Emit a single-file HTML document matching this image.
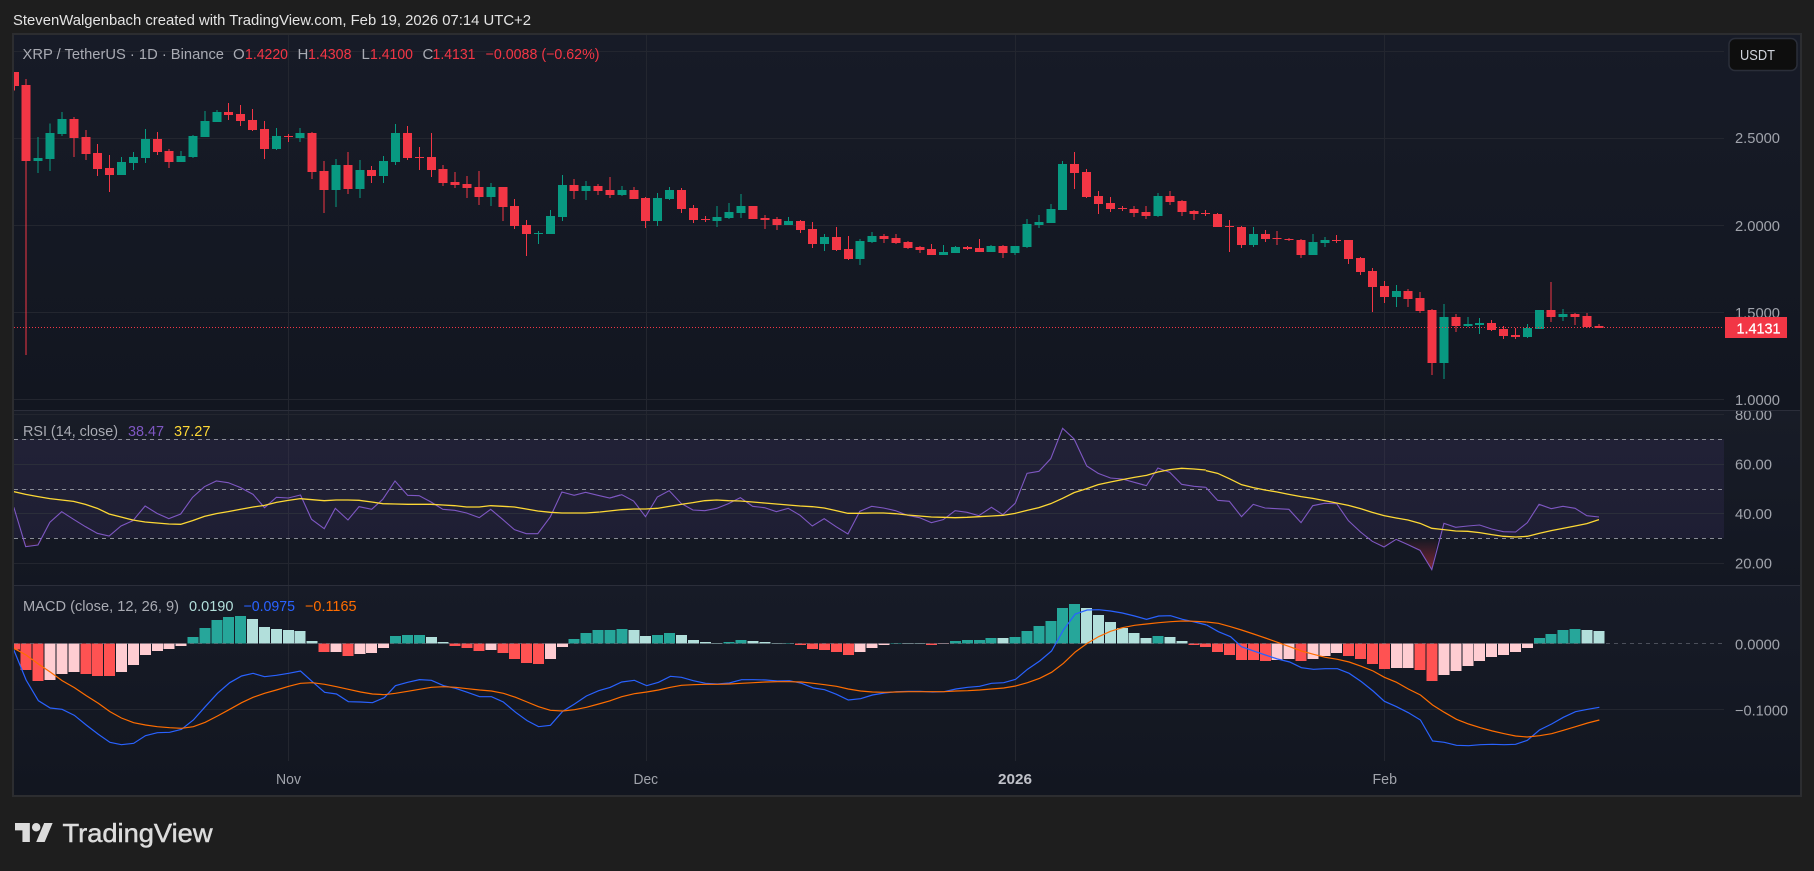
<!DOCTYPE html>
<html lang="en"><head><meta charset="utf-8"><title>XRP / TetherUS chart</title>
<style>
html,body{margin:0;padding:0;background:#1e1e1e;width:1814px;height:871px;overflow:hidden}
svg{position:absolute;left:0;top:0;display:block}
text{font-family:"Liberation Sans",sans-serif;font-size:15px}
.n{vector-effect:non-scaling-stroke;fill:none}
.b{vector-effect:non-scaling-stroke;fill:none;shape-rendering:crispEdges}
.s{fill:#a0a3ab}
.l{fill:#a9abb3}
.r{fill:#f23645}
</style></head><body>
<svg width="1814" height="871" viewBox="0 0 1814 871" xmlns="http://www.w3.org/2000/svg">
<defs>
<linearGradient id="g1" x1="0" y1="0" x2="0" y2="1"><stop offset="0" stop-color="#171b27"/><stop offset="1" stop-color="#121620"/></linearGradient>
<linearGradient id="g2" x1="0" y1="0" x2="0" y2="1"><stop offset="0" stop-color="#181c27"/><stop offset="1" stop-color="#131722"/></linearGradient>
<linearGradient id="rf" gradientUnits="userSpaceOnUse" x1="0" y1="415" x2="0" y2="515"><stop offset="0" stop-color="#f23645" stop-opacity="0"/><stop offset="1" stop-color="#f23645" stop-opacity=".5"/></linearGradient>
<clipPath id="cp"><rect x="14" y="35" width="1786" height="760"/></clipPath>
<clipPath id="c80"><rect x="1725" y="411" width="75" height="20"/></clipPath>
</defs>
<rect width="1814" height="871" fill="#1e1e1e"/>
<text x="13" y="25" textLength="518" lengthAdjust="spacingAndGlyphs" fill="#e4e4e4">StevenWalgenbach created with TradingView.com, Feb 19, 2026 07:14 UTC+2</text>

<rect x="14" y="35" width="1786" height="375" fill="url(#g1)"/>
<rect x="14" y="410" width="1786" height="175" fill="url(#g2)"/>
<rect x="14" y="585" width="1786" height="210" fill="url(#g1)"/>

<g clip-path="url(#cp)">
<!-- grid -->
<g stroke="#23262f" stroke-width="1" shape-rendering="crispEdges">
<path d="M14 51.5H1724M14 138.5H1724M14 225.5H1724M14 312.5H1724M14 399.5H1724M14 414.5H1724M14 464.5H1724M14 513.5H1724M14 563.5H1724M14 709.5H1724"/>
<path d="M288.5 35V761M646.5 35V761M1015.5 35V761M1384.5 35V761"/>
</g>
<rect x="14" y="439" width="1710" height="99" fill="#7e57c2" fill-opacity=".1"/>
<g stroke="#2b2e3a" stroke-width="1" shape-rendering="crispEdges">
<path d="M14 410.5H1800M14 585.5H1800M14 464.5H1724M14 513.5H1724"/>
</g>
<g stroke="#8a8d96" stroke-width="1" stroke-dasharray="4 4" shape-rendering="crispEdges">
<path d="M14 439.5H1724M14 489.5H1724M14 538.5H1724"/>
</g>

<!-- candles k=-1..49 -->
<g transform="translate(26.2,0) scale(11.914,.33333)">
<path class="b" stroke="#089981" stroke-width="1" d="M1 411V519M2 370V513M3 336V408M8 471V525M9 456V510M10 387V489M13 453V486M14 405V474M15 333V411M16 330V366M21 384V450M23 384V426M26 477V621M28 480V594M30 468V549M31 372V495M39 549V618M43 693V732M44 630V702M45 525V663M47 543V600"/>
<path class="b" stroke="#089981" stroke-width="9" d="M1 474V483M2 399V477M3 357V402M8 486V525M9 471V489M10 417V474M13 468V486M14 408V471M15 363V411M16 336V366M21 408V447M23 399V414M26 495V570M28 510V567M30 483V528M31 399V486M39 561V591M43 699V702M44 648V702M45 555V651M47 558V573"/>
<path class="b" stroke="#f23645" stroke-width="1" d="M-1 216V272M0 237V1065M4 351V471M5 390V480M6 432V528M7 465V576M11 396V465M12 447V504M17 309V360M18 315V378M19 327V393M20 363V477M22 402V426M24 396V537M25 483V639M27 456V582M29 498V549M32 378V480M33 441V510M34 399V531M35 495V558M36 516V564M37 528V594M38 513V615M40 561V663M41 597V687M42 660V768M46 537V597M48 552V585M49 531V594"/>
<path class="b" stroke="#f23645" stroke-width="9" d="M-1 216V258M0 255V483M4 357V414M5 411V462M6 459V507M7 504V525M11 417V456M12 453V486M17 336V345M18 342V363M19 360V390M20 387V447M22 408V411M24 399V516M25 513V570M27 495V567M29 510V528M32 399V474M33 471V474M34 471V510M35 507V549M36 546V555M37 552V564M38 561V591M40 561V621M41 618V678M42 675V702M46 555V573M48 558V573M49 570V585"/>
</g>
<!-- candles k=50..99 -->
<g transform="translate(26.2,100) scale(11.914,.33333)">
<path class="b" stroke="#089981" stroke-width="1" d="M50 258V288M53 279V378M54 261V300M58 318V381M59 309V357M60 282V354M64 351V375M67 402V453M70 417V495M71 396V429M77 435V465M78 438V459M81 435V456M83 438V465M84 357V444M85 345V384M86 312V369M87 183V330M95 279V351"/>
<path class="b" stroke="#089981" stroke-width="9" d="M50 270V285M53 294V363M54 270V297M58 351V363M59 336V354M60 318V339M64 363V375M67 411V432M70 423V477M71 408V426M77 456V465M78 441V459M81 438V456M83 438V459M84 372V441M85 366V375M86 327V369M87 192V330M95 288V348"/>
<path class="b" stroke="#f23645" stroke-width="1" d="M51 261V297M52 291V384M55 264V339M56 315V369M57 348V366M61 318V357M62 345V387M63 351V390M65 360V399M66 366V444M68 381V453M69 408V480M72 402V429M73 402V432M74 423V447M75 438V459M76 432V465M79 438V450M80 417V456M82 435V474M88 156V267M89 207V294M90 273V342M91 291V336M92 318V333M93 318V351M94 318V357M96 273V315M97 300V348M98 330V360M99 330V348"/>
<path class="b" stroke="#f23645" stroke-width="9" d="M51 270V297M52 294V363M55 270V327M56 324V360M57 357V360M61 318V357M62 354V360M63 357V375M65 363V390M66 387V432M68 411V450M69 447V477M72 408V417M73 414V429M74 426V444M75 441V450M76 447V465M79 441V447M80 444V456M82 438V459M88 192V219M89 216V291M90 288V312M91 309V327M92 324V327M93 327V339M94 336V348M96 288V306M97 303V336M98 333V342M99 339V342"/>
</g>
<!-- candles k=100..132 -->
<g transform="translate(26.2,0) scale(11.914,.33333)">
<path class="b" stroke="#089981" stroke-width="1" d="M103 681V741M108 702V765M109 711V741M115 855V921M119 912V1137M121 951V981M122 954V1002M126 972V1014M127 930V987M129 927V963"/>
<path class="b" stroke="#089981" stroke-width="9" d="M103 702V735M108 726V765M109 720V729M115 873V891M119 951V1089M121 972V978M122 969V975M126 984V1011M127 930V987M129 942V951"/>
<path class="b" stroke="#f23645" stroke-width="1" d="M100 639V681M101 660V756M102 678V744M104 690V726M105 693V735M106 714V723M107 717V774M110 705V729M111 720V792M112 771V825M113 804V936M114 843V909M116 867V921M117 876V939M118 927V1125M120 942V996M123 960V993M124 978V1017M125 984V1017M128 846V966M130 939V975M131 939V984M132 972V984"/>
<path class="b" stroke="#f23645" stroke-width="9" d="M100 642V681M101 678V681M102 681V735M104 702V717M105 714V717M106 717V720M107 720V765M110 720V723M111 720V777M112 774V816M113 813V861M114 858V891M116 873V897M117 894V933M118 930V1089M120 951V978M123 969V990M124 987V1008M125 1005V1011M128 930V951M130 942V951M131 948V981M132 978V984"/>
</g>
<path d="M14 327.5H1724" stroke="#f23645" stroke-width="1" stroke-dasharray="1 2" shape-rendering="crispEdges" fill="none"/>

<!-- RSI oversold fills -->
<g transform="translate(1200,400) scale(.39154,.33333)"><polygon fill="url(#rf)" points="425,415 440,424 470,441 490,424 501,418 531,434 562,451 592,509 608,415"/></g>
<g transform="translate(0,400) scale(.39541,.33333)"><polygon fill="url(#rf)" points="50,415 65,440 96,435 112,415"/></g>

<!-- RSI line -->
<g transform="translate(0,400) scale(.39541,.33333)">
<polyline class="n" stroke="#7e57c2" stroke-width="1.1" points="35,322 65,440 96,435 126,367 156,335 186,358 216,380 246,400 276,408 306,378 336,362 367,318 397,340 427,356 457,342 487,292 517,260 547,243 577,248 607,262 640,283 669,323 699,292 729,294 760,285 788,358 820,386 848,325 880,360 908,320 940,328 968,298 999,243 1031,286 1060,287 1090,306 1120,328 1150,331 1180,339 1212,353 1241,328 1271,358 1301,389 1331,401 1360,401 1392,350 1421,276 1452,286 1481,277 1512,286 1542,294 1568,285"/>
<polyline class="n" stroke="#fdd835" stroke-width="1.3" points="35,275 65,283 96,290 126,296 186,304 216,313 246,325 276,342 306,351 336,360 367,366 397,369 427,372 457,373 487,362 517,349 547,341 577,335 607,328 640,321 669,316 699,307 729,301 760,296 790,299 820,302 850,300 880,300 908,301 940,306 968,311 1000,312 1031,313 1060,313 1090,313 1120,315 1150,317 1180,321 1212,321 1241,317 1271,319 1301,321 1331,327 1360,333 1392,337 1421,339 1452,339 1481,339 1517,336"/>
</g>
<g transform="translate(600,400) scale(.39541,.33333)">
<polyline class="n" stroke="#7e57c2" stroke-width="1.1" points="25,294 55,284 85,303 115,350 145,291 175,272 205,310 235,330 265,332 295,325 325,311 355,293 386,319 416,323 446,335 476,325 506,346 537,378 567,356 597,380 627,402 657,334 687,319 717,324 747,332 778,346 808,353 838,368 868,359 898,332 928,337 958,347 990,322 1019,344 1050,310 1080,220 1110,214 1140,176 1170,85 1199,117 1231,198 1260,220 1291,234 1321,237 1351,247 1382,257 1411,204 1441,217 1471,253 1502,259 1532,262"/>
<polyline class="n" stroke="#fdd835" stroke-width="1.3" points="0,336 55,329 85,327 115,327 145,325 175,319 205,313 235,308 265,302 295,300 325,302 355,303 386,306 416,309 446,312 476,315 506,318 537,320 567,324 597,332 627,340 657,340 687,339 717,339 747,341 778,345 808,348 838,351 868,352 898,353 928,352 958,350 990,348 1019,346 1050,340 1080,331 1110,323 1140,311 1170,295 1199,278 1231,266 1260,254 1291,246 1321,239 1351,232 1382,226 1411,216 1441,209 1471,205 1502,207 1532,210"/>
</g>
<g transform="translate(1200,400) scale(.39154,.33333)">
<polyline class="n" stroke="#7e57c2" stroke-width="1.1" points="15,262 45,301 75,304 106,350 136,313 166,324 197,326 227,328 258,368 288,317 318,310 349,311 379,362 410,396 440,424 470,441 501,418 531,434 562,451 592,509 623,370 653,382 684,378 714,375 745,387 775,395 806,396 836,368 866,313 897,326 927,319 958,325 988,347 1019,351"/>
<polyline class="n" stroke="#fdd835" stroke-width="1.3" points="15,212 45,220 75,236 106,254 136,263 166,270 197,276 227,283 258,290 288,295 318,302 349,309 379,316 410,326 440,337 470,347 501,354 531,360 562,370 592,385 623,389 653,393 684,394 714,398 745,404 775,409 806,411 836,409 866,400 897,392 927,385 958,378 988,371 1019,359"/>
</g>

<!-- MACD histogram -->
<g transform="translate(26.2,590) scale(11.914,.33333)">
<path class="b" stroke="#ff5252" stroke-width="11" d="M-1 160V178M0 160V240M1 160V273M5 160V252M6 160V258M7 160V258M25 160V186M27 160V198M36 160V168M37 160V174M38 160V183M40 160V189M41 160V207M42 160V219M43 160V222M65 160V165M66 160V177M67 160V180M68 160V186M69 160V195M76 160V165M98 160V165M99 160V171M100 160V186M101 160V195M102 160V210M103 160V210M104 160V213M107 160V213M111 160V198M112 160V207M113 160V222M114 160V237M117 160V240M118 160V273"/>
<path class="b" stroke="#ffcdd2" stroke-width="11" d="M2 160V270M3 160V252M4 160V246M8 160V246M9 160V225M10 160V195M11 160V183M12 160V177M13 160V168M26 160V186M28 160V192M29 160V189M30 160V174M39 160V180M44 160V207M45 160V171M70 160V186M71 160V174M72 160V165M77 160V162M105 160V210M106 160V207M108 160V207M109 160V198M110 160V189M115 160V234M116 160V234M119 160V255M120 160V243M121 160V228M122 160V213M123 160V201M124 160V195M125 160V186M126 160V174"/>
<path class="b" stroke="#26a69a" stroke-width="11" d="M14 160V141M15 160V114M16 160V90M17 160V81M18 160V78M31 160V138M32 160V135M33 160V135M46 160V147M47 160V129M48 160V120M49 160V120M50 160V117M53 160V135M54 160V129M59 160V156M60 160V150M64 160V159M73 160V159M78 160V153M79 160V150M80 160V150M81 160V144M83 160V141M84 160V123M85 160V108M86 160V93M87 160V54M88 160V42M95 160V138M127 160V144M128 160V132M129 160V120M130 160V117"/>
<path class="b" stroke="#b2dfdb" stroke-width="11" d="M19 160V87M20 160V111M21 160V117M22 160V120M23 160V123M24 160V153M34 160V141M35 160V156M51 160V120M52 160V138M55 160V135M56 160V150M57 160V156M58 160V159M61 160V153M62 160V156M63 160V159M74 160V159M75 160V159M82 160V144M89 160V54M90 160V75M91 160V96M92 160V114M93 160V129M94 160V144M96 160V141M97 160V153M131 160V120M132 160V123"/>
</g>
<path d="M14 643.5H1724" stroke="#787b86" stroke-opacity=".55" stroke-width="1" stroke-dasharray="4 4" shape-rendering="crispEdges" fill="none"/>

<!-- MACD lines -->
<g transform="translate(0,590) scale(.39541,.33333)">
<polyline class="n" stroke="#2962ff" stroke-width="1.2" points="35,180 66,270 97,332 127,354 157,358 188,376 218,405 249,433 278,457 307,464 338,460 368,437 398,428 429,427 459,418 489,390 519,350 550,310 581,278 611,258 640,250 669,260 699,256 730,250 760,243 790,275 821,307 851,312 881,335 912,336 942,338 972,323 1000,287 1031,277 1061,269 1091,271 1122,287 1152,295 1182,307 1213,320 1243,320 1273,336 1304,367 1333,392 1362,410 1392,406 1423,364 1453,342 1483,318 1514,302 1544,292"/>
<polyline class="n" stroke="#ff6d00" stroke-width="1.2" points="35,175 66,195 97,222 127,246 157,272 188,293 218,317 249,340 278,365 307,384 338,398 368,405 398,410 429,413 459,415 489,410 519,397 550,378 581,358 611,338 640,322 669,310 699,300 730,289 760,280 790,278 821,283 851,290 881,298 912,306 942,312 972,314 1000,310 1031,304 1061,298 1091,292 1122,290 1152,292 1182,296 1213,300 1243,303 1273,310 1304,322 1333,336 1362,350 1392,361 1423,363 1453,359 1483,352 1514,342 1544,332"/>
</g>
<g transform="translate(600,590) scale(.39541,.33333)">
<polyline class="n" stroke="#2962ff" stroke-width="1.2" points="26,292 55,276 87,271 118,287 148,277 178,259 206,262 236,272 267,280 297,282 327,279 358,269 388,269 419,270 449,273 479,272 510,280 540,294 568,299 598,313 628,330 659,326 689,315 719,309 750,305 780,304 810,304 841,306 870,305 900,297 930,292 960,289 990,280 1021,278 1051,268 1081,238 1112,213 1142,183 1172,120 1202,72 1232,60 1261,59 1291,63 1321,69 1352,78 1382,88 1413,78 1443,77 1473,88 1504,96 1534,105"/>
<polyline class="n" stroke="#ff6d00" stroke-width="1.2" points="26,332 55,320 87,311 118,306 148,300 178,292 206,286 236,284 267,283 297,283 327,282 358,280 388,278 419,276 449,275 479,275 510,276 540,280 568,284 598,289 628,297 659,303 689,306 719,307 750,306 780,305 810,305 841,305 870,305 900,303 930,302 960,300 990,297 1021,294 1051,288 1081,278 1112,265 1142,247 1172,220 1202,186 1232,160 1261,140 1291,124 1321,113 1352,106 1382,102 1413,98 1443,95 1473,93 1504,94 1534,96"/>
</g>
<g transform="translate(1200,590) scale(.39154,.33333)">
<polyline class="n" stroke="#2962ff" stroke-width="1.2" points="17,105 47,125 78,140 106,170 137,183 167,195 198,207 229,216 259,233 290,238 320,236 351,236 381,250 412,275 442,303 471,334 502,350 532,368 563,390 594,453 624,457 655,466 686,467 716,464 747,463 777,464 806,463 836,451 867,420 898,402 928,382 959,365 990,358 1020,352"/>
<polyline class="n" stroke="#ff6d00" stroke-width="1.2" points="17,96 47,100 78,110 106,120 137,132 167,144 198,157 229,170 259,183 290,193 320,202 351,208 381,216 412,229 442,243 471,262 502,277 532,297 563,315 594,345 624,367 655,388 686,402 716,413 747,423 777,431 806,438 836,441 867,437 898,431 928,421 959,410 990,399 1020,390"/>
</g>
</g>

<!-- chart border -->
<rect x="13" y="34" width="1788" height="762" fill="none" stroke="#2c2d30" stroke-width="2"/>

<!-- legend main -->
<text class="l" x="22.5" y="59" textLength="201.5" lengthAdjust="spacingAndGlyphs">XRP / TetherUS · 1D · Binance</text>
<text class="l" x="233" y="59">O</text><text class="r" x="245" y="59" textLength="43" lengthAdjust="spacingAndGlyphs">1.4220</text>
<text class="l" x="297.5" y="59">H</text><text class="r" x="308" y="59" textLength="43.5" lengthAdjust="spacingAndGlyphs">1.4308</text>
<text class="l" x="361.5" y="59">L</text><text class="r" x="370" y="59" textLength="43" lengthAdjust="spacingAndGlyphs">1.4100</text>
<text class="l" x="422.5" y="59">C</text><text class="r" x="432.5" y="59" textLength="43" lengthAdjust="spacingAndGlyphs">1.4131</text>
<text class="r" x="485.5" y="59" textLength="114" lengthAdjust="spacingAndGlyphs">−0.0088 (−0.62%)</text>

<!-- USDT -->
<rect x="1729" y="38.5" width="68" height="32" rx="6" fill="#0e0e0e" stroke="#2a2e39" stroke-width="1.5"/>
<text x="1740" y="60" textLength="35" lengthAdjust="spacingAndGlyphs" fill="#d1d4dc">USDT</text>

<!-- price scale -->
<text class="s" x="1735" y="143" textLength="45" lengthAdjust="spacingAndGlyphs">2.5000</text>
<text class="s" x="1735" y="231" textLength="45" lengthAdjust="spacingAndGlyphs">2.0000</text>
<text class="s" x="1735" y="318" textLength="45" lengthAdjust="spacingAndGlyphs">1.5000</text>
<text class="s" x="1735" y="405" textLength="45" lengthAdjust="spacingAndGlyphs">1.0000</text>
<rect x="1725" y="317" width="62" height="21" fill="#f23645"/>
<text x="1736.5" y="333.5" textLength="44" lengthAdjust="spacingAndGlyphs" fill="#fff" stroke="#fff" stroke-width=".25">1.4131</text>
<g clip-path="url(#c80)"><text class="s" x="1735" y="420" textLength="37" lengthAdjust="spacingAndGlyphs">80.00</text></g>
<text class="s" x="1735" y="469.5" textLength="37" lengthAdjust="spacingAndGlyphs">60.00</text>
<text class="s" x="1735" y="519" textLength="37" lengthAdjust="spacingAndGlyphs">40.00</text>
<text class="s" x="1735" y="568.5" textLength="37" lengthAdjust="spacingAndGlyphs">20.00</text>
<text class="s" x="1735" y="649.5" textLength="45" lengthAdjust="spacingAndGlyphs">0.0000</text>
<text class="s" x="1735" y="715.5" textLength="53" lengthAdjust="spacingAndGlyphs">−0.1000</text>

<!-- RSI legend -->
<text class="l" x="23" y="436" textLength="95" lengthAdjust="spacingAndGlyphs">RSI (14, close)</text>
<text x="128" y="436" textLength="36" lengthAdjust="spacingAndGlyphs" fill="#7e57c2">38.47</text>
<text x="174" y="436" textLength="36.5" lengthAdjust="spacingAndGlyphs" fill="#fdd835">37.27</text>

<!-- MACD legend -->
<text class="l" x="23" y="611" textLength="156" lengthAdjust="spacingAndGlyphs">MACD (close, 12, 26, 9)</text>
<text x="189" y="611" textLength="44.5" lengthAdjust="spacingAndGlyphs" fill="#b2dfdb">0.0190</text>
<text x="243.5" y="611" textLength="51.5" lengthAdjust="spacingAndGlyphs" fill="#2962ff">−0.0975</text>
<text x="305" y="611" textLength="51.5" lengthAdjust="spacingAndGlyphs" fill="#ff6d00">−0.1165</text>

<!-- time scale -->
<text class="s" x="276" y="784" textLength="25" lengthAdjust="spacingAndGlyphs">Nov</text>
<text class="s" x="633.5" y="784" textLength="24.5" lengthAdjust="spacingAndGlyphs">Dec</text>
<text x="998" y="784" textLength="34" lengthAdjust="spacingAndGlyphs" fill="#c0c2c9" font-weight="700">2026</text>
<text class="s" x="1372.5" y="784" textLength="24.5" lengthAdjust="spacingAndGlyphs">Feb</text>

<!-- logo -->
<g transform="translate(15,818.8) scale(1.06,1.056)" fill="#dcdcdc">
<path d="M14 22H7V11H0V4h14v18zM28 22h-8l7.5-18h8L28 22z"/><circle cx="20" cy="8" r="4"/>
</g>
<text x="62.5" y="842" textLength="150" lengthAdjust="spacingAndGlyphs" fill="#dcdcdc" stroke="#dcdcdc" stroke-width=".5" style="font-size:26px">TradingView</text>
</svg>
</body></html>
